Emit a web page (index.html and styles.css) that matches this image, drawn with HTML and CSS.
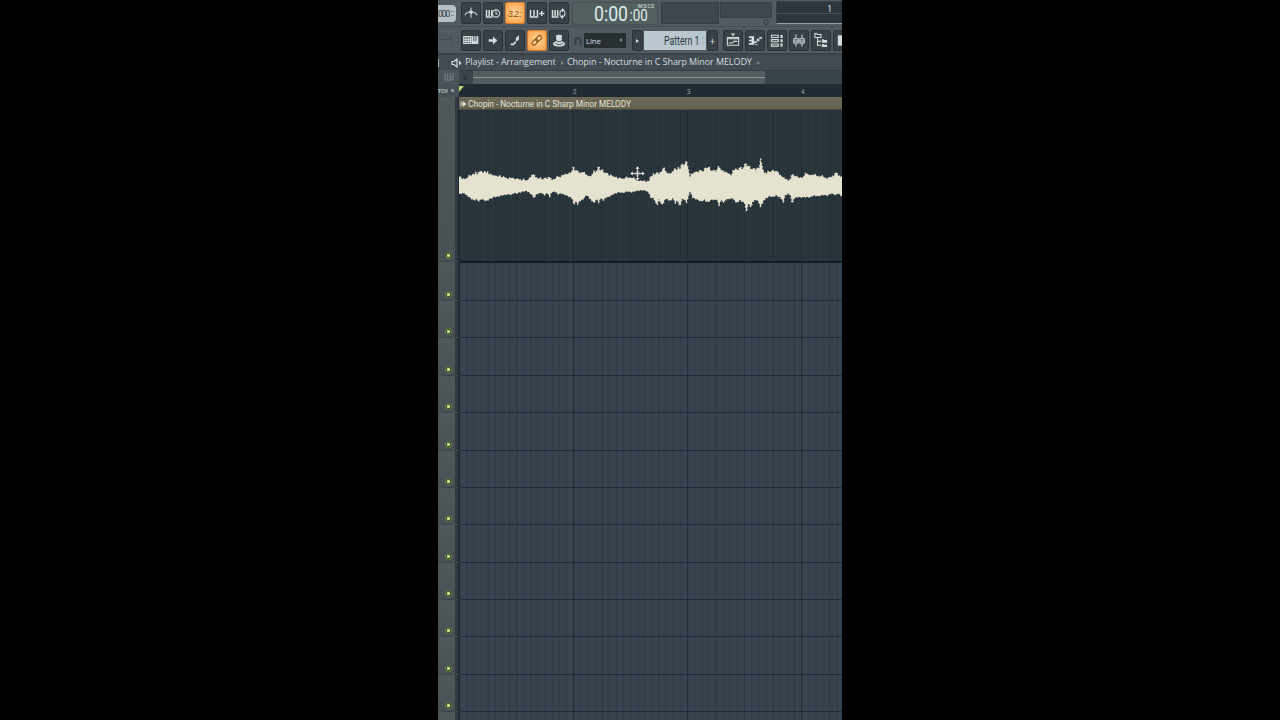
FILE: index.html
```html
<!DOCTYPE html>
<html lang="en">
<head>
<meta charset="utf-8">
<meta name="viewport" content="width=device-width, initial-scale=1">
<title>Playlist - Arrangement</title>
<link rel="stylesheet" href="styles.css">
</head>
<body>
<div class="app">
  <div class="toolbar">
    <div class="tempo">000<i></i></div>
    <div class="buttons">
      <button><svg viewBox="0 0 20 22"><path d="M3 13q2-4 7-4t7 4M10 4v12" class="line"/><path d="M10 7l2.500 2.500-2.500 2.500-2.500-2.500z"/></svg></button>
      <button><svg viewBox="0 0 20 22"><path d="M2.500 7v8h7M5.500 7v7M8.500 7v7" class="line bold"/><circle cx="13.500" cy="11" r="4.200" class="line face"/><path d="M13.500 8.500v3h2" class="line"/></svg></button>
      <button class="on"><svg viewBox="0 0 20 22"><text x="2" y="15" textLength="16" class="count">3.2.:</text></svg></button>
      <button><svg viewBox="0 0 20 22"><path d="M2.500 7v8h8v-8M6.500 7v7M12.500 11h6M15.500 8v6" class="line bold"/></svg></button>
      <button><svg viewBox="0 0 20 22"><path d="M2.500 7v8h7M5.500 7v7M8.500 7v7" class="line bold"/><path d="M14 7q-3 1-3 4t1.500 3.500M14 15q3-1 3-4t-1.500-3.500" class="line"/><path d="M13.500 4.500l3 2.500-3 2.500zM14.500 12.500l-3 2.500 3 2.500z"/></svg></button>
    </div>
    <div class="clock">
      <svg viewBox="0 0 86 25"><text transform="translate(22 21) scale(.84 1)" class="time">0:00</text><text transform="translate(57.500 21) scale(.84 1)" class="cents">:00</text><text x="66" y="7.500" textLength="16" class="unit">M:S:CS</text></svg>
    </div>
    <div class="meter"></div>
    <div class="scope"><span></span><i></i></div>
    <div class="cpu">1</div>
  </div>

  <div class="toolbar second">
    <div class="handle"></div>
    <div class="buttons">
      <button><svg viewBox="0 0 20 22"><path d="M1.500 6.500h8v8h-8zM4 7v7M7 7v7M1.500 9.500h8M1.500 12h8" class="line"/><path d="M10.500 6h8v9h-8z"/><path d="M13.200 6v6M15.800 6v6" class="cut"/></svg></button>
      <button><svg viewBox="0 0 20 22"><path d="M5 9.500h5V6.500l5 4.500-5 4.500v-3H5z"/></svg></button>
      <button><svg viewBox="0 0 20 22"><path d="M14.500 5v5l-3.500 2.500V8zM10 11.500l1.500 2-3 3H5v-2h3z"/></svg></button>
      <button class="on"><svg viewBox="0 0 20 22"><g transform="rotate(-45 10 11)" class="line"><rect x="3" y="8.500" width="8" height="4.500" rx="2.200"/><rect x="9" y="8.500" width="8" height="4.500" rx="2.200"/></g></svg></button>
      <button><svg viewBox="0 0 20 22"><path d="M6.500 5q3.500-1.500 7 0l-.5 7q4 1 4 3-1 3-7 3t-7-3q0-2 4-3z"/><path d="M7 11.500q3 2 6 0M5 14q5 3.500 10 0" class="cut"/></svg></button>
    </div>
    <svg class="magnet" viewBox="0 0 8 10"><path d="M1.500 9V5a2.500 3 0 0 1 5 0v4"/></svg>
    <div class="snap">Line<i class="arrow"></i></div>
    <div class="pattern">
      <button class="narrow"><i class="arrow light"></i></button>
      <div class="name"><svg viewBox="0 0 62 19"><text transform="translate(20 13.700) scale(.73 1)">Pattern 1</text><path d="M57.500 8l1.500-2 1.500 2M57.500 11l1.500 2 1.500-2"/></svg></div>
      <button class="narrow">+</button>
    </div>
    <div class="buttons windows">
      <button><svg viewBox="0 0 20 22"><path d="M7.500 3h5l-2.500 3z"/><path d="M3.500 7.500h13v9h-13zM3.500 9h13M5 14h4l2-2h4" class="line"/></svg></button>
      <button><svg viewBox="0 0 20 22"><path d="M3 6h6v10H3v-2h3v-2H3v-2h3V8H3zM9 12h3v2H9zM12 9h3v3h-3zM15 7h3v2h-3zM10 15h3v1h-3z"/></svg></button>
      <button><svg viewBox="0 0 20 22"><path d="M3.500 5h8v2.500h-8zM3.500 10h8v2.500h-8zM3.500 15h8v2.500h-8z" class="line"/><path d="M14 4.500h2.500V8H14zM14 9.500h2.500V13H14zM14 14.500h2.500V18H14z"/></svg></button>
      <button><svg viewBox="0 0 20 22"><path d="M6.500 4v14M13.500 4v14" class="line"/><path d="M4 9h5v5H4zM11 9h5v5h-5z" class="line face"/><path d="M4 11.500h5M11 11.500h5" class="line"/></svg></button>
      <button><svg viewBox="0 0 20 22"><path d="M3 3h2l1 1h4v3.500H3zM6 8v8.500h4M6 12h4" class="line"/><path d="M11 9.500h2v1h4v3h-6zM11 15h2v1h4v2.500h-6z"/></svg></button>
      <button><svg viewBox="0 0 20 22"><path d="M4 5h12v12H4z"/></svg></button>
    </div>
  </div>

  <div class="titlebar">
    <i class="edge"></i>
    <svg class="speaker" viewBox="0 0 11 10"><path d="M1 3.500h2L6 1v8L3 6.500H1z" class="line"/><path d="M8 2.500l2.500 2.500L8 7.500z"/></svg>
    <span class="crumb">Playlist - Arrangement</span><i class="arrow"></i><span class="crumb song">Chopin - Nocturne in C Sharp Minor MELODY</span><i class="arrow"></i>
  </div>

  <div class="playlist">
    <div class="corner"><svg viewBox="0 0 10 8"><path d="M1 0v7h8V0M3.700 0v6M6.300 0v6"/></svg></div>
    <div class="scroll"><b></b><div class="thumb"></div></div>

    <div class="pitch">TCH<i></i></div>
    <div class="ruler"><i class="marker"></i><span>2</span><span>3</span><span>4</span></div>

    <div class="heads">
      <div class="head tall"><i class="led"></i></div>
      <div class="head"><i class="led"></i></div>
      <div class="head"><i class="led"></i></div>
      <div class="head"><i class="led"></i></div>
      <div class="head"><i class="led"></i></div>
      <div class="head"><i class="led"></i></div>
      <div class="head"><i class="led"></i></div>
      <div class="head"><i class="led"></i></div>
      <div class="head"><i class="led"></i></div>
      <div class="head"><i class="led"></i></div>
      <div class="head"><i class="led"></i></div>
      <div class="head"><i class="led"></i></div>
      <div class="head"><i class="led"></i></div>
      <div class="head"></div>
    </div>

    <div class="tracks">
      <div class="clip">
        <div class="clip-title"><svg viewBox="0 0 383 13"><path d="M2 4.500v5M2 7h2M4 4.700l3 2.300-3 2.300z"/><text x="9" y="10" textLength="163" lengthAdjust="spacingAndGlyphs">Chopin - Nocturne in C Sharp Minor MELODY</text></svg></div>
        <svg class="wave" viewBox="12 -120 1149 453">
          <path d="M12 85L14 78 18 84 22 88 28 86 34 88 38 82 44 74 48 80 52 72 58 74 62 68 66 74 72 66 76 64 80 66 86 68 90 65 94 68 98 66 102 74 108 72 114 78 120 76 126 80 134 78 140 82 148 80 156 88 164 84 172 84 180 88 190 86 198 92 206 88 214 94 222 86 228 80 236 72 240 80 248 86 256 84 264 90 270 82 276 88 284 80 290 90 300 88 308 78 314 84 322 76 330 74 338 72 346 68 352 64 355 48 358 64 364 60 370 66 376 70 384 66 390 70L390 142 380 150 374 152 368 162 362 152 357 164 354 150 348 142 340 138 330 134 320 130 310 132 300 124 288 128 284 138 276 128 268 134 260 128 250 130 242 134 238 144 232 136 226 130 216 122 206 124 196 126 186 130 176 128 170 134 160 132 150 134 140 136 132 138 124 140 116 140 110 144 104 146 96 152 88 150 80 146 72 152 64 148 56 150 50 146 44 142 38 138 30 130 20 130 12 132z"/>
          <path transform="translate(375 0)" d="M10 70L12 76 20 74 28 80 36 76 42 64 48 68 52 60 56 48 60 64 66 58 72 70 80 68 88 78 94 74 100 82 106 80 114 86 122 84 130 88 140 82 150 84 160 84 170 90 180 94 190 92 200 96 208 92 212 78 216 82 220 72 226 76 230 66 236 72 244 66 252 52 256 64 262 70 270 72 280 64 286 54 290 62 296 52 300 60 306 40 310 50 319 32 324 54 330 84 334 72 342 70 348 64 354 68 362 60 370 66 376 52 382 56 386 50 390 56L390 152 380 156 374 148 366 154 356 150 346 146 338 142 330 122 320 156 314 148 306 146 300 168 292 150 286 158 280 144 270 152 262 146 254 148 248 164 242 158 236 146 232 166 224 150 218 140 214 146 208 130 200 122 185 120 170 122 155 126 140 124 128 128 116 126 106 130 96 134 86 140 78 142 70 150 62 144 56 156 50 146 42 158 34 150 26 140 18 134 10 140z"/>
          <path transform="translate(750 0)" d="M12 54L18 64 26 60 34 66 40 48 46 58 52 62 60 66 70 70 80 78 84 62 92 58 100 60 106 50 110 58 116 54 122 38 126 52 132 46 138 60 146 54 152 62 158 52 163 56 167 26 172 54 176 66 184 72 190 62 196 68 202 60 210 66 216 62 224 76 232 80 240 86 250 92 258 86 261 72 268 78 276 80 284 84 296 82 302 68 308 74 318 76 330 74 340 80 352 78 364 86 376 82 386 78 394 66 400 78 411 80L411 138 400 130 392 134 380 130 366 136 352 134 340 138 324 136 316 142 304 140 290 142 276 140 266 146 261 160 258 138 250 130 240 136 235 154 226 142 214 136 204 140 194 138 184 144 176 150 172 160 166 168 158 150 150 150 142 156 138 172 130 158 124 186 120 160 112 154 104 150 96 158 90 152 82 144 74 146 64 148 56 156 48 150 42 164 36 146 30 150 22 148 12 152z"/>
        </svg>
      </div>
      <div class="lane"></div><div class="lane"></div><div class="lane"></div><div class="lane"></div>
      <div class="lane"></div><div class="lane"></div><div class="lane"></div><div class="lane"></div>
      <div class="lane"></div><div class="lane"></div><div class="lane"></div><div class="lane"></div>
      <div class="lane"></div>
      <svg class="grid" viewBox="0 0 383 623"></svg>
    </div>
  </div>
  <svg class="cursor" viewBox="0 0 15 15"><path d="M7.500 0L10 3H8.300v2.200a2.500 2.500 0 0 1 1.500 1.500H12V5l3 2.500L12 10V8.300H9.800a2.500 2.500 0 0 1-1.500 1.500V12H10l-2.500 3L5 12h1.700V9.800a2.500 2.500 0 0 1-1.500-1.500H3V10L0 7.500 3 5v1.700h2.200a2.500 2.500 0 0 1 1.500-1.500V3H5z"/><circle cx="7.500" cy="7.500" r="1.500"/></svg>
</div>
<script>
// 16 steps per bar, a bar is 114px wide
const grid = document.querySelector('.grid');
for (let i = 0; i * 7.125 < 383; i++) {
  const line = document.createElementNS('http://www.w3.org/2000/svg', 'line');
  const x = 0.6 + i * 7.125;
  line.setAttribute('x1', x);
  line.setAttribute('x2', x);
  line.setAttribute('y1', 13);
  line.setAttribute('y2', 623);
  line.setAttribute('class', i % 16 === 0 ? 'bar' : i % 4 === 0 ? 'beat' : 'step');
  grid.appendChild(line);
}
</script>
</body>
</html>
```
FILE: styles.css
```css
* {
  box-sizing: border-box;
}
body {
  margin: 0;
  background: #000;
  color: #d5dde0;
  font-family: "Open Sans", "Noto Sans", sans-serif;
  overflow: hidden;
}
.app {
  position: relative;
  width: 404px;
  height: 720px;
  margin: 0 auto;
  overflow: hidden;
  background: #50595f;
}
svg {
  display: block;
  fill: #d5dde0;
}
.line {
  fill: none;
  stroke: #d5dde0;
  stroke-width: 1.2;
}
.bold {
  stroke-width: 1.7;
}
.face {
  fill: #394146;
}
.cut {
  fill: none;
  stroke: #394146;
  stroke-width: 1;
}

/* toolbars */
.toolbar {
  display: flex;
  height: 27px;
  padding-top: 2px;
  background: #525b61;
  border-bottom: 1px solid #454d53;
}
.toolbar.second {
  height: 28px;
  padding-top: 3px;
  background: #515a60;
  border-bottom: 2px solid #3a4247;
}
.toolbar > * {
  flex: none;
}
.tempo {
  width: 18px;
  height: 17px;
  margin: 3px 5px 0 0;
  border-radius: 0 4px 4px 0;
  background: #b5c0c5;
  color: #30383d;
  font: 8.5px/18px Roboto, sans-serif;
  letter-spacing: -1px;
  display: flex;
}
.tempo i {
  width: 3px;
  height: 5px;
  margin: 6px 0 0 2px;
  border: solid #7e898f;
  border-width: 1px 0;
}
.handle {
  width: 14px;
  height: 12px;
  margin: 4px 9px 0 0;
  border-right: 1px solid #444c51;
  background: linear-gradient(#444c51, #444c51) 0 5px / 100% 1px no-repeat;
}
.buttons {
  display: flex;
  gap: 2px;
}
button {
  width: 20px;
  height: 22px;
  padding: 0;
  border: 1px solid #2b3236;
  border-radius: 2px;
  background: #394146;
  color: #d5dde0;
  flex: none;
}
.second button {
  height: 21px;
}
button svg {
  width: 18px;
  height: 19px;
}
button.on {
  border-color: #d87b28;
  background: radial-gradient(#ffdca0, #f99a42);
}
.on .line {
  stroke: #8a4a12;
}
.count {
  font: italic 10px "Liberation Sans", sans-serif;
  fill: #8a4510;
}
.clock {
  width: 86px;
  height: 23px;
  margin-left: 3px;
  background: #52605f;
  border: 1px solid #465250;
}
.clock svg {
  width: 86px;
  height: 25px;
  margin: -3px 0 0 -1px;
}
.clock text {
  font-family: Roboto, sans-serif;
  fill: #dfeeee;
}
.clock .time {
  font-size: 21px;
}
.clock .cents {
  font-size: 16px;
}
.clock .unit {
  font-size: 5px;
}
.meter {
  width: 58px;
  height: 22px;
  margin-left: 3px;
  background: #3e464e;
  border: 1px solid #363e44;
}
.scope {
  width: 52px;
  margin-left: 1px;
}
.scope span {
  display: block;
  height: 16px;
  background: #3e464e;
  border: 1px solid #363e44;
}
.scope i {
  display: block;
  width: 6px;
  height: 6px;
  margin: 1px 0 0 43px;
  border: 1px solid #333b40;
  border-radius: 50%;
}
.cpu {
  width: 68px;
  height: 23px;
  margin: -1px 0 0 4px;
  padding-right: 11px;
  background: linear-gradient(#49525a, #49525a) 0 11px / 100% 1px no-repeat #2e363d;
  border: 1px solid #394047;
  border-bottom-color: #949fa5;
  font: 9px/14px Roboto, sans-serif;
  text-align: right;
}
.magnet {
  width: 8px;
  height: 10px;
  margin: 6px 2px 0 5px;
  fill: none;
  stroke: #353d42;
  stroke-width: 2;
}
.snap {
  display: flex;
  align-items: center;
  justify-content: space-between;
  width: 42px;
  height: 15px;
  margin-top: 3px;
  padding: 0 3px 1px 2px;
  background: #282f33;
  font-size: 8px;
  letter-spacing: -0.2px;
}
.arrow {
  border: solid transparent;
  border-width: 2.5px 0 2.5px 3px;
  border-left-color: #7c878c;
}
.arrow.light {
  display: block;
  width: 0;
  margin: 0 auto;
  border-left-color: #d5dde0;
}
.pattern {
  display: flex;
  gap: 1px;
  margin-left: 6px;
}
.pattern .narrow {
  width: 11px;
  font: 11px/18px "Open Sans", sans-serif;
}
.pattern .name {
  width: 62px;
  height: 19px;
  margin-top: 1px;
  background: #b9c7cf;
}
.name svg {
  width: 62px;
  height: 19px;
  fill: #2d3a42;
}
.name text {
  font: 12px Roboto, sans-serif;
}
.name path {
  fill: none;
  stroke: #8c999f;
  stroke-width: 0.7;
}
.windows {
  margin-left: 5px;
}

/* breadcrumb */
.titlebar {
  display: flex;
  align-items: center;
  height: 15px;
  background: #414b51;
  font-size: 9px;
  line-height: 12px;
  white-space: nowrap;
}
.edge {
  width: 1px;
  height: 8px;
  background: #a5afb3;
}
.speaker {
  width: 11px;
  height: 10px;
  margin: 0 3px 0 12px;
}
.crumb {
  width: 92px;
  margin: -1px 4px 0 0;
  letter-spacing: -0.08px;
}
.crumb.song {
  width: 186px;
  margin-left: 3px;
}

/* playlist */
.playlist {
  display: grid;
  grid-template-columns: 21px 383px;
  grid-template-rows: 14px 13px 623px;
}
.corner {
  padding: 3px 0 0 6px;
  background: #4b5459;
}
.corner svg {
  width: 10px;
  height: 8px;
  fill: none;
  stroke: #7c868a;
}
.scroll {
  display: flex;
  background: #3a444b;
  border-top: 1px solid #343d43;
}
.scroll b {
  width: 5px;
  height: 5px;
  margin: 4px 4px 0 5px;
  border: solid #283136;
  border-width: 0 0 1px 1px;
  transform: rotate(45deg);
}
.thumb {
  width: 292px;
  height: 13px;
  background: linear-gradient(#8b958e, #8b958e) 0 6px / 100% 1px no-repeat #515d60;
}
.pitch {
  display: flex;
  align-items: center;
  gap: 3px;
  overflow: hidden;
  background: #485156;
  color: #bcc5c8;
  font-size: 5px;
  font-weight: bold;
}
.pitch i {
  width: 3px;
  height: 3px;
  border-radius: 50%;
  background: #a3adb1;
}
.ruler {
  display: flex;
  overflow: hidden;
  background: #202c33;
  color: #95a1a6;
  font: 6.5px/16px Roboto, sans-serif;
}
.ruler > * {
  flex: 0 0 114px;
}
.marker:before {
  content: "";
  display: block;
  width: 0;
  margin-top: 2px;
  border-top: 6px solid #b5dd70;
  border-right: 5px solid transparent;
}
.heads {
  background: linear-gradient(90deg, #495156 0 17px, #303a40 17px 20px, #1f2b32 20px);
}
.head {
  height: 37.38px;
  display: flex;
  align-items: flex-end;
  padding: 0 0 2px 7px;
  background: linear-gradient(#50585c, #485054) 0 0 / 17px 100% no-repeat;
  border-bottom: 1px solid #3e474c;
}
.head.tall {
  height: 165px;
}
.head.tall + .head {
  height: 39px;
}
.led {
  width: 7px;
  height: 7px;
  padding: 1px;
  border: 1px solid #65883e;
  border-radius: 50%;
  background: #35432f;
}
.led:before {
  content: "";
  display: block;
  height: 3px;
  border-radius: 1px;
  background: #cdec90;
}
.tracks {
  position: relative;
  overflow: hidden;
}
.clip {
  height: 165px;
  background: #28363c;
  border-bottom: 1px solid #0d1b24;
}
.clip-title {
  height: 13px;
  background: linear-gradient(#6e6a56, #646150);
  border-bottom: 1px solid #48493f;
}
.clip-title svg {
  width: 383px;
  height: 13px;
  fill: #e4e2d2;
}
.clip-title path {
  stroke: #e4e2d2;
  stroke-width: 0.8;
}
.clip-title text {
  font: 9px Roboto, sans-serif;
}
.wave {
  position: relative;
  z-index: 1;
  width: 383px;
  height: 151px;
  fill: #e5e2d0;
  stroke: #e5e2d0;
  stroke-width: 5;
  stroke-dasharray: 3 7 4 9;
}
.lane {
  height: 37.38px;
  background: #364450;
  border-bottom: 1px solid #1d2d39;
}
.clip + .lane {
  height: 39px;
  border-top: 1px solid #14222b;
}
/* step lines run over the clip and all lanes */
.grid {
  position: absolute;
  top: 0;
  left: 0;
  width: 383px;
  height: 623px;
}
.grid line {
  stroke: #152530;
  stroke-width: 1;
}
.grid .step {
  stroke-opacity: 0.22;
}
.grid .beat {
  stroke-opacity: 0.4;
}
.grid .bar {
  stroke-opacity: 0.7;
}
.cursor {
  position: absolute;
  z-index: 2;
  left: 192px;
  top: 166px;
  width: 15px;
  height: 15px;
  fill: #fff;
  stroke: #222;
  stroke-width: 0.6;
}
```
